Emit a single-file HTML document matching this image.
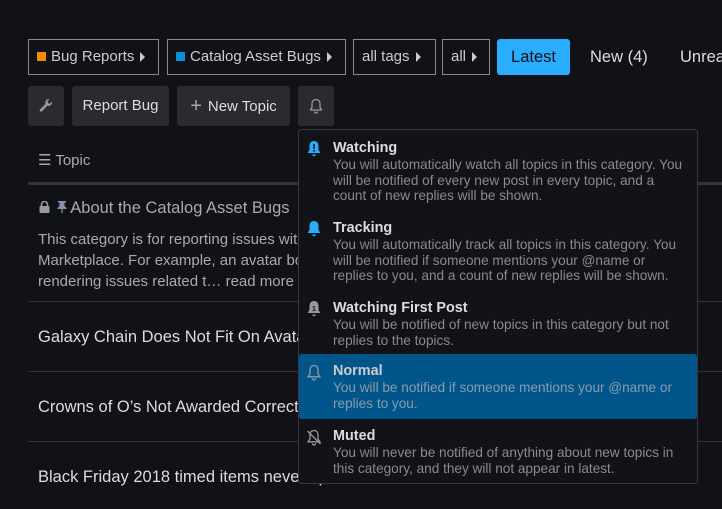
<!DOCTYPE html>
<html><head><meta charset="utf-8"><style>
*{box-sizing:border-box;margin:0;padding:0}
body{width:722px;height:509px;overflow:hidden;background:#111217;font-family:"Liberation Sans",sans-serif;color:#ddd;position:relative}
.a{position:absolute;white-space:nowrap}
.crumb{position:absolute;top:39px;height:36px;border:1px solid #8a8a8a;font-size:15px;color:#ccc;line-height:34px;padding-left:8px;white-space:nowrap}
.crumb .sq{display:inline-block;width:9px;height:9px;margin-right:5px;vertical-align:0px}
.tri{display:inline-block;width:0;height:0;border-left:5px solid #ccc;border-top:5px solid transparent;border-bottom:5px solid transparent;margin-left:6px;vertical-align:-1px}
.btn{position:absolute;top:86px;height:40px;background:#2a2b2f;border-radius:3px;color:#ddd;font-size:15px;line-height:40px;text-align:center;white-space:nowrap}
.row{position:absolute;left:28px;width:694px;height:1px;background:#333438}
.title{position:absolute;left:38px;font-size:16.5px;color:#ddd;white-space:nowrap}
.dd{position:absolute;left:298px;top:129px;width:400px;height:355px;background:#121318;border:1px solid #38393d;border-radius:4px;overflow:hidden}
.it{position:absolute;left:0;width:398px}
.it b{position:absolute;left:34px;font-size:14.4px;color:#ddd}
.it p{position:absolute;left:34px;font-size:13.6px;color:#8a8a8a;line-height:15.6px;white-space:nowrap}
.it svg{position:absolute;left:7px}
</style></head><body>
<div class="crumb" style="left:28px;width:131px"><span class="sq" style="background:#f68b00"></span>Bug Reports<span class="tri"></span></div>
<div class="crumb" style="left:167px;width:179px"><span class="sq" style="background:#0d8fd8"></span>Catalog Asset Bugs<span class="tri"></span></div>
<div class="crumb" style="left:353px;width:83px">all tags<span class="tri"></span></div>
<div class="crumb" style="left:442px;width:48px">all<span class="tri"></span></div>
<div class="a" style="left:497px;top:39px;width:73px;height:36px;background:#2aacff;border-radius:3px;color:#111;font-size:16.5px;line-height:36px;text-align:center">Latest</div>
<div class="a" style="left:590px;top:39px;font-size:16.5px;line-height:36px;color:#ddd">New (4)</div>
<div class="a" style="left:680px;top:39px;font-size:16.5px;line-height:36px;color:#ddd">Unread</div>

<div class="btn" style="left:28px;width:36px"><svg width="16" height="16" viewBox="0 0 16 16" style="margin-top:12px"><path d="M14 4.5a3.5 3.5 0 0 1-4.6 3.3L4 13.2a1.3 1.3 0 0 1-1.9-1.9L7.5 6A3.5 3.5 0 0 1 11.5 1.2L9.5 3.3l.6 1.8 1.8.6 2-2Z" fill="#999"/></svg></div>
<div class="btn" style="left:72px;width:97px">Report Bug</div>
<div class="btn" style="left:177px;width:113px"><span style="font-size:20px;color:#aaa;vertical-align:-1px;margin-right:6px">+</span>New Topic</div>
<div class="btn" style="left:298px;width:36px"><svg width="14" height="16" viewBox="0 0 14 16" style="margin-top:12px"><path d="M7 1.5c-2.6 0-4 2-4 4.5v3.5L1.5 12h11L11 9.5V6c0-2.5-1.4-4.5-4-4.5Z M5.5 13.5a1.5 1.5 0 0 0 3 0" fill="none" stroke="#999" stroke-width="1.3"/></svg></div>

<div class="a" style="left:38px;top:151px;font-size:15px;color:#aaa">☰ Topic</div>
<div class="a" style="left:28px;top:182px;width:694px;height:3px;background:#333438"></div>

<div class="title" style="top:199px;color:#aaa;left:39px">
<svg width="11" height="12" viewBox="0 0 11 12" style="vertical-align:0px"><rect x="0.5" y="5" width="10" height="7" rx="1" fill="#999"/><path d="M2.5 5V3.5a3 3 0 0 1 6 0V5" fill="none" stroke="#999" stroke-width="1.6"/></svg>
<svg width="10" height="13" viewBox="0 0 10 13" style="vertical-align:0px;margin-left:2px"><path d="M1 1h8v1.5H7.5V6L9.5 8v1H5.6v4H4.4V9H.5V8l2-2V2.5H1Z" fill="#8a90b0"/></svg>
About the Catalog Asset Bugs</div>
<div class="a" style="left:38px;top:229px;font-size:15px;color:#aaa;line-height:21px;white-space:normal;width:700px">This category is for reporting issues with catalog assets found in the<br>Marketplace. For example, an avatar body part<br>rendering issues related t… read more</div>
<div class="row" style="top:301px"></div>
<div class="title" style="top:328px">Galaxy Chain Does Not Fit On Avatar</div>
<div class="row" style="top:371px"></div>
<div class="title" style="top:398px">Crowns of O’s Not Awarded Correctly</div>
<div class="row" style="top:441px"></div>
<div class="title" style="top:468px">Black Friday 2018 timed items never updated</div>

<div class="dd">
 <div class="it" style="top:1px;height:80px">
  <svg width="16" height="18" viewBox="0 0 16 18" style="top:9px"><path d="M8 1c-3 0-4.5 2.3-4.5 5v4L1.5 13h13l-2-3V6C12.5 3.3 11 1 8 1Z M6.3 14.5a1.7 1.7 0 0 0 3.4 0Z" fill="#2aacff"/><rect x="7.2" y="4" width="1.6" height="5" fill="#121318"/><rect x="7.2" y="10" width="1.6" height="1.6" fill="#121318"/></svg>
  <b style="top:9px">Watching</b>
  <p style="top:26px">You will automatically watch all topics in this category. You<br>will be notified of every new post in every topic, and a<br>count of new replies will be shown.</p>
 </div>
 <div class="it" style="top:81px;height:80px">
  <svg width="16" height="18" viewBox="0 0 16 18" style="top:9px"><path d="M8 1c-3 0-4.5 2.3-4.5 5v4L1.5 13h13l-2-3V6C12.5 3.3 11 1 8 1Z M6.3 14.5a1.7 1.7 0 0 0 3.4 0Z" fill="#2aacff"/></svg>
  <b style="top:9px">Tracking</b>
  <p style="top:26px">You will automatically track all topics in this category. You<br>will be notified if someone mentions your @name or<br>replies to you, and a count of new replies will be shown.</p>
 </div>
 <div class="it" style="top:161px;height:63px">
  <svg width="16" height="18" viewBox="0 0 16 18" style="top:9px"><path d="M8 1c-3 0-4.5 2.3-4.5 5v4L1.5 13h13l-2-3V6C12.5 3.3 11 1 8 1Z M6.3 14.5a1.7 1.7 0 0 0 3.4 0Z" fill="#999"/><text x="8" y="11" font-size="7" font-weight="bold" text-anchor="middle" fill="#121318" font-family="Liberation Sans">1</text></svg>
  <b style="top:9px">Watching First Post</b>
  <p style="top:26px">You will be notified of new topics in this category but not<br>replies to the topics.</p>
 </div>
 <div class="it" style="top:224px;height:65px;background:#00568a;border-radius:3px">
  <svg width="16" height="18" viewBox="0 0 16 18" style="top:10px"><path d="M8 1.5c-2.7 0-4 2-4 4.5v4L2 12.8h12L12 10V6c0-2.5-1.3-4.5-4-4.5Z M6.3 14.3a1.7 1.7 0 0 0 3.4 0" fill="none" stroke="#999" stroke-width="1.3"/></svg>
  <b style="top:9px;color:#ccc">Normal</b>
  <p style="top:26px;color:#8a9aaa">You will be notified if someone mentions your @name or<br>replies to you.</p>
 </div>
 <div class="it" style="top:289px;height:64px">
  <svg width="16" height="18" viewBox="0 0 16 18" style="top:10px"><path d="M8 1.5c-2.7 0-4 2-4 4.5v4L2 12.8h12L12 10V6c0-2.5-1.3-4.5-4-4.5Z M6.3 14.3a1.7 1.7 0 0 0 3.4 0 M1.5 2l13 13" fill="none" stroke="#999" stroke-width="1.3"/></svg>
  <b style="top:9px">Muted</b>
  <p style="top:26px">You will never be notified of anything about new topics in<br>this category, and they will not appear in latest.</p>
 </div>
</div>
</body></html>
